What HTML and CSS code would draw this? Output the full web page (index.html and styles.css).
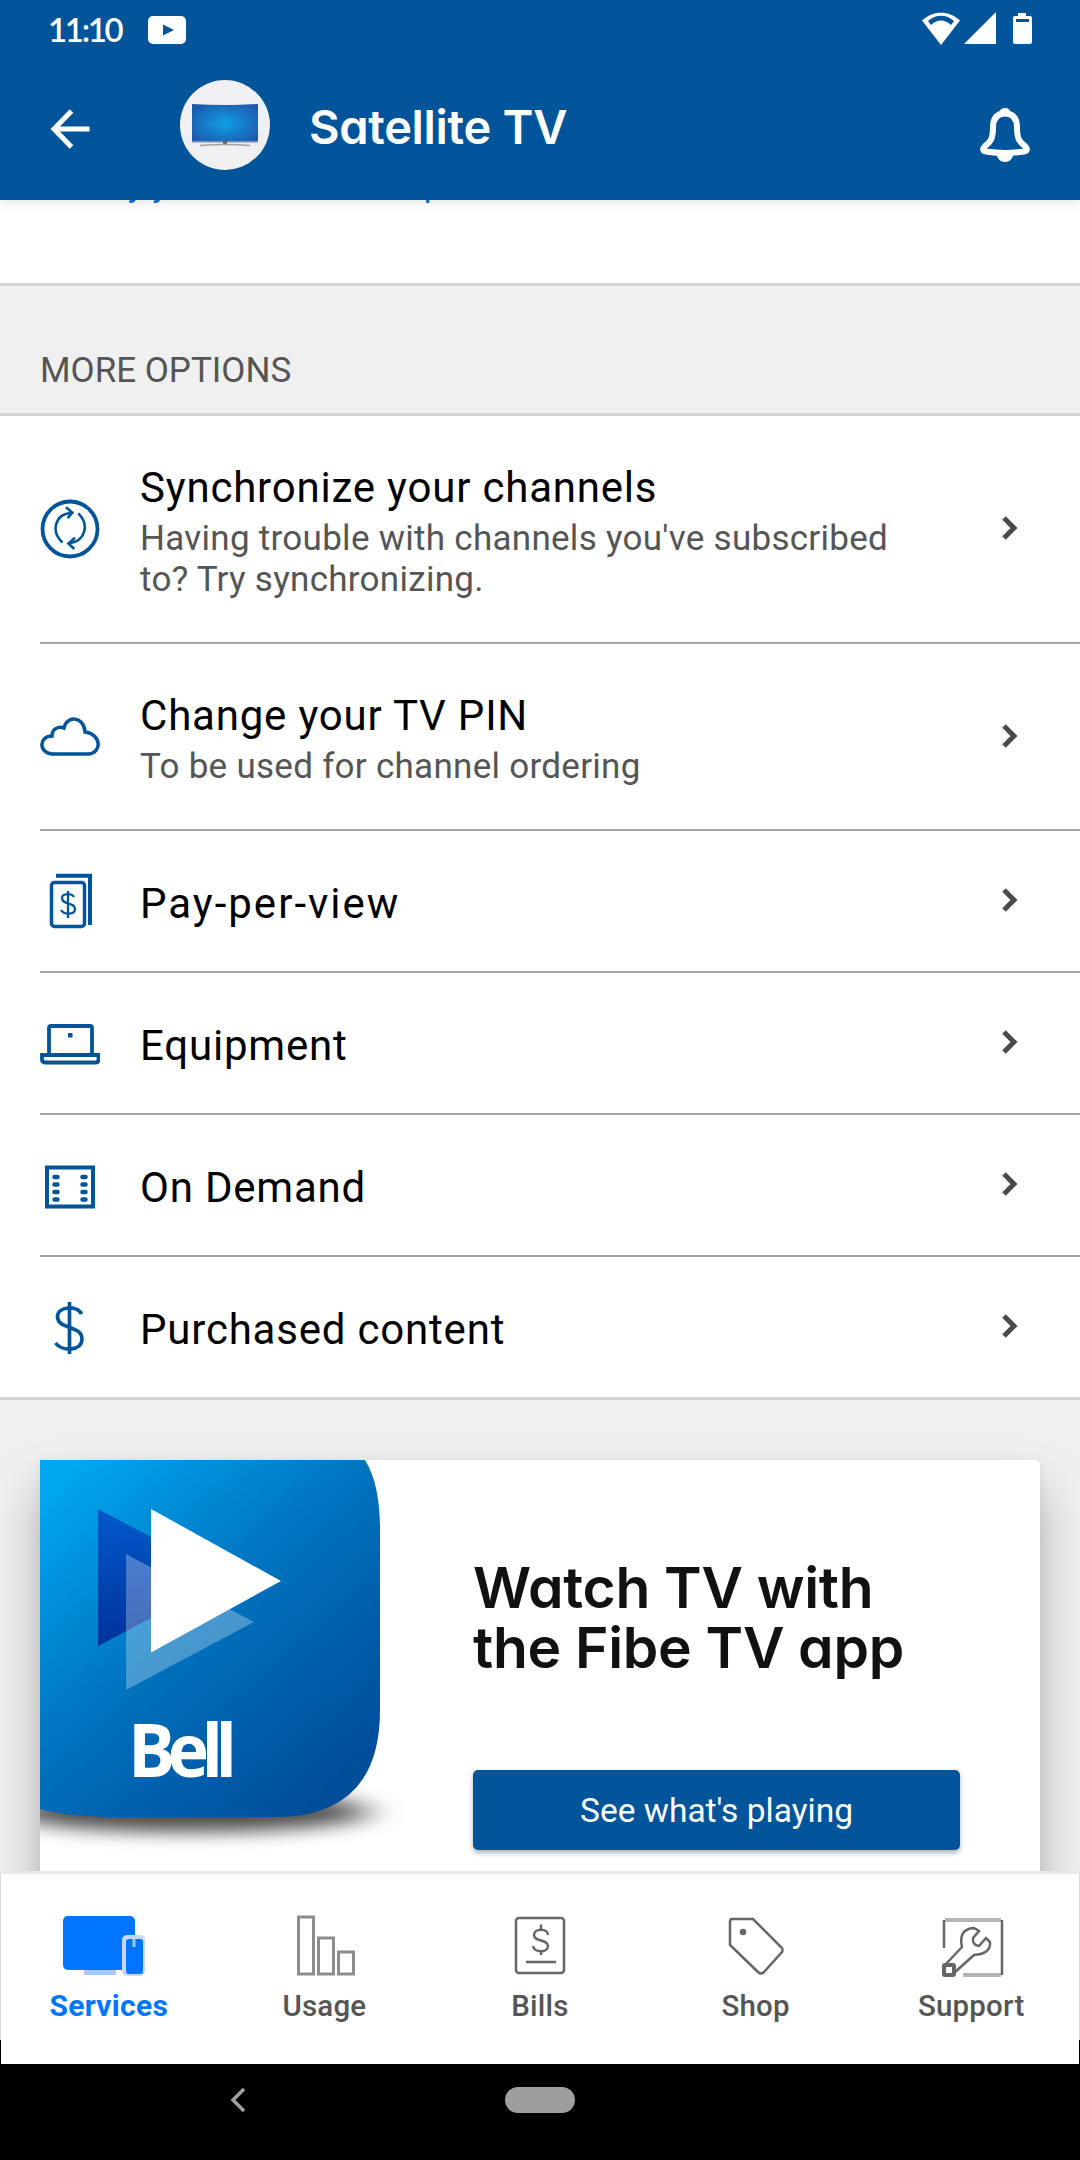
FILE: index.html
```html
<!DOCTYPE html>
<html lang="en">

<head>
    <meta charset="UTF-8">
    <meta name="viewport" content="width=device-width, initial-scale=1.0">
    <title>Satellite TV</title>
    <link rel="stylesheet" href="styles.css">
</head>

<body>
    <header class="header">
        <div class="status-bar">
            <span class="time">11:10</span>
            <svg class="youtube" width="38" height="28" viewBox="0 0 38 28">
                <rect width="38" height="28" rx="5" fill="#fff"/>
                <path d="M15 8.500v11l11-5.500z" fill="#00549a"/>
            </svg>
            <svg class="signals" width="112" height="34" viewBox="0 0 112 34" fill="#fff">
                <path fill-rule="evenodd" d="M21 33 2 8.500C13-2 29-2 40 8.500zM8 9l3 4C17 7 25 7 31 13l3-4C26 2 16 2 8 9z"/>
                <path d="M44 32 76 0v32z"/>
                <path fill-rule="evenodd" d="M98 1h8v3h4q2 0 2 2v24q0 2-2 2H95q-2 0-2-2V6q0-2 2-2h3zM96 7v3h13V7z"/>
            </svg>
        </div>
        <div class="app-bar">
            <svg class="back" width="40" height="40" viewBox="0 0 40 40" fill="none" stroke="#fff" stroke-width="5">
                <path d="M21.500 2 4 20l17.500 18M4 20h35.500"/>
            </svg>
            <div class="avatar">
                <svg width="66" height="43" viewBox="0 0 66 43">
                    <defs>
                        <radialGradient id="screen" cx="50%" cy="52%" r="60%">
                            <stop offset="0" stop-color="#0e9fe3"/>
                            <stop offset="1" stop-color="#1d5bb0"/>
                        </radialGradient>
                    </defs>
                    <path d="M0 0q33 2 66 0v37.500H0z" fill="url(#screen)"/>
                    <path d="M0 38h66" fill="none" stroke="#7184a0"/>
                    <path d="M31 37h4v3h-4z" fill="#666"/>
                    <path d="M8 41.500q25-2 50 0" fill="none" stroke="#a3a0a8" stroke-width="1.500"/>
                </svg>
            </div>
            <h1 class="title">Satellite TV</h1>
            <svg class="alerts" width="50" height="54" viewBox="0 0 50 54">
                <path d="M25 5.500c-9 0-12 6-12 14 0 12-3 15-8 18.500-3 3-2 5 1 5.500q19 3 38 0c3-.5 4-2.500 1-5.500-5-3.500-8-6.500-8-18.500 0-8-3-14-12-14z" fill="none" stroke="#fff" stroke-width="6"/>
                <path d="M19 5q1-5 6-5t6 5zM16 45h18q-2 9-9 9t-9-9z" fill="#fff"/>
            </svg>
        </div>
    </header>

    <main class="content">
        <section class="lineup">
            <a class="lineup-link">Modify your channel lineup</a>
        </section>

        <h2 class="section-title">MORE OPTIONS</h2>

        <ul class="options">
            <li class="option">
                <svg class="icon" width="60" height="60" viewBox="0 0 60 60">
                    <circle cx="30" cy="30" r="27.500" stroke-width="3.800"/>
                    <path stroke-width="2.600" d="M22.500 43.500C11 33 14 15 32 13.700M26 8.300l6.300 5.400-4.600 5.400M38.300 14.300C50 26 45 43 28.500 44.500M35 38.700l-6.500 5.800 5.800 5.500"/>
                </svg>
                <div class="option-text">
                    <h3>Synchronize your channels</h3>
                    <p>Having trouble with channels you've subscribed<br>to? Try synchronizing.</p>
                </div>
                <svg class="chevron" width="16" height="24" viewBox="0 0 16 24"><path d="M2 2l10 10L2 22"/></svg>
            </li>
            <li class="option">
                <svg class="icon" width="60" height="60" viewBox="0 0 60 60">
                    <path stroke-width="3.500" d="M12 47C-2 45.500-1 29 12 29 12 22 18 19 24 21 26 8.500 44 8.500 45 25 62 27 62 46.500 48 47z"/>
                </svg>
                <div class="option-text">
                    <h3>Change your TV PIN</h3>
                    <p>To be used for channel ordering</p>
                </div>
                <svg class="chevron" width="16" height="24" viewBox="0 0 16 24"><path d="M2 2l10 10L2 22"/></svg>
            </li>
            <li class="option">
                <svg class="icon" width="60" height="60" viewBox="0 0 60 60">
                    <rect x="11.500" y="11.500" width="33" height="44" rx="3" stroke-width="3.500"/>
                    <path stroke-width="4" d="M16 4.700h34V54"/>
                    <path stroke-width="2.300" d="M28 20v27M34 26c-2-4-12-4-12 1 0 7 13 4 13 11 0 6-11 6-14 1"/>
                </svg>
                <div class="option-text">
                    <h3 class="hyphenated">Pay-per-view</h3>
                </div>
                <svg class="chevron" width="16" height="24" viewBox="0 0 16 24"><path d="M2 2l10 10L2 22"/></svg>
            </li>
            <li class="option">
                <svg class="icon" width="60" height="60" viewBox="0 0 60 60">
                    <path stroke-width="3.800" d="M9 41V15q0-2 2-2h39q2 0 2 2v26M2 42h56.500v4.500q0 3-3 3h-50q-3.500 0-3.500-3z"/>
                    <path stroke="none" fill="#00549a" d="M28 20h4.500v4.500H28z"/>
                </svg>
                <div class="option-text">
                    <h3>Equipment</h3>
                </div>
                <svg class="chevron" width="16" height="24" viewBox="0 0 16 24"><path d="M2 2l10 10L2 22"/></svg>
            </li>
            <li class="option">
                <svg class="icon" width="60" height="60" viewBox="0 0 60 60">
                    <rect x="7" y="12.500" width="46" height="39" stroke-width="4"/>
                    <path stroke-width="4.500" stroke-linecap="round" d="M14.500 22h3M14.500 29.500h3M14.500 37h3M14.500 44.500h3M42.500 22h3M42.500 29.500h3M42.500 37h3M42.500 44.500h3"/>
                </svg>
                <div class="option-text">
                    <h3>On Demand</h3>
                </div>
                <svg class="chevron" width="16" height="24" viewBox="0 0 16 24"><path d="M2 2l10 10L2 22"/></svg>
            </li>
            <li class="option">
                <svg class="icon" width="60" height="60" viewBox="0 0 60 60">
                    <path stroke-width="3.700" d="M29.500 5v52M41.500 17C38 8 17 9 17.500 20 18 33 42 28 42 42 42 54 22 55 15.500 46"/>
                </svg>
                <div class="option-text">
                    <h3>Purchased content</h3>
                </div>
                <svg class="chevron" width="16" height="24" viewBox="0 0 16 24"><path d="M2 2l10 10L2 22"/></svg>
            </li>
        </ul>

        <section class="promo">
            <svg class="promo-image" width="380" height="460" viewBox="0 0 380 460">
                <defs>
                    <linearGradient id="tile" gradientUnits="userSpaceOnUse" x1="10" y1="20" x2="300" y2="350">
                        <stop offset="0" stop-color="#00a8f2"/>
                        <stop offset="0.45" stop-color="#0074bf"/>
                        <stop offset="0.75" stop-color="#005ba8"/>
                        <stop offset="1" stop-color="#004b97"/>
                    </linearGradient>
                    <linearGradient id="back" x1="0" y1="0" x2="0" y2="1">
                        <stop offset="0" stop-color="#0059cb"/>
                        <stop offset="1" stop-color="#00329a"/>
                    </linearGradient>
                    <filter id="soft" x="-30%" y="-150%" width="160%" height="400%">
                        <feGaussianBlur stdDeviation="18 9"/>
                    </filter>
                </defs>
                <ellipse cx="150" cy="352" rx="180" ry="20" fill="#000" opacity="0.7" filter="url(#soft)"/>
                <path d="M0-20h300Q340-6 340 70V250Q340 357 235 357H80Q30 357 0 349z" fill="url(#tile)"/>
                <path d="M58 49l130 68.500L58 186z" fill="url(#back)"/>
                <path d="M86 94l128 68L86 230z" fill="#fff" opacity="0.28"/>
                <path d="M111 49l130 72-130 71.500z" fill="#fff"/>
                <text class="promo-logo" transform="translate(88 317) scale(.95 1)">Bell</text>
            </svg>
            <div class="promo-body">
                <h2>Watch TV with<br>the Fibe TV app</h2>
                <button class="promo-button">See what's playing</button>
            </div>
        </section>
    </main>

    <nav class="tabs">
        <a class="tab active">
            <svg width="84" height="64" viewBox="0 0 84 64">
                <path fill="#a8c6ff" d="M22 54h32v7H22z"/>
                <rect x="1" y="2" width="72" height="54" rx="5" fill="#0075ff"/>
                <rect x="60" y="21" width="23" height="41" rx="5" fill="#c8d6ff"/>
                <rect x="64" y="25" width="17" height="35" rx="3" fill="#0075ff"/>
                <path d="M72 25v8" stroke="#a8c6ff" stroke-width="3"/>
            </svg>
            <span>Services</span>
        </a>
        <a class="tab usage">
            <svg width="60" height="64" viewBox="0 0 60 64">
                <path d="M3.500 3h15v57h-15zM23.500 24h15v36h-15zM43.500 38h15v22h-15z"/>
            </svg>
            <span>Usage</span>
        </a>
        <a class="tab">
            <svg width="52" height="64" viewBox="0 0 52 64">
                <rect x="2" y="4" width="48" height="55" rx="3"/>
                <path d="M12 48h30M27 10.500v5M27 36v5M34 21c0-7-14-7-14 0 0 7 14 4 14 11 0 7-14 7-15 0"/>
            </svg>
            <span>Bills</span>
        </a>
        <a class="tab">
            <svg width="58" height="64" viewBox="0 0 58 64">
                <path d="M5 5h21l29 29q1 2 0 4L37 58q-3 3-6 0L3 31V8q0-3 2-3z"/>
                <circle cx="16" cy="18" r="2" fill="#666"/>
            </svg>
            <span>Shop</span>
        </a>
        <a class="tab support">
            <svg width="62" height="64" viewBox="0 0 62 64">
                <path d="M3 6h56M21 61h38" stroke="#b5b5b5" stroke-width="4"/>
                <path d="M2 34V6M60 6v55"/>
                <path d="M4 50 20 33q-4-18 12-19l5 3-6 7q-1 7 6 8l7-8 4 4q1 12-16 13L12 59"/>
                <rect x="2" y="51" width="10" height="10" rx="1" stroke-width="4"/>
            </svg>
            <span>Support</span>
        </a>
    </nav>

    <footer class="system-bar">
        <svg width="18" height="26" viewBox="0 0 18 26" fill="none" stroke="#a0a0a0" stroke-width="3.500"><path d="M15 2 4 13l11 11"/></svg>
        <div class="home-pill"></div>
    </footer>
</body>

</html>
```
FILE: styles.css
```css
:root {
    --blue: #00549a;
    --grey-bg: #f0f0f0;
    --text-muted: #555555;
    --active: #0075ff;
}

* {
    box-sizing: border-box;
}

body {
    display: flex;
    flex-direction: column;
    width: 1080px;
    height: 2160px;
    margin: 0;
    overflow: hidden;
    background-color: #ffffff;
    font-family: Roboto, sans-serif;
}

h1,
h2,
h3,
p,
ul {
    margin: 0;
    padding: 0;
    font-weight: 400;
}

svg {
    display: block;
    flex-shrink: 0;
}

/* header */
.header {
    position: relative;
    z-index: 2;
    flex: 0 0 200px;
    background-color: var(--blue);
    color: #ffffff;
    box-shadow: 0 2px 10px rgba(0, 0, 0, 0.12);
}

.status-bar {
    display: flex;
    align-items: center;
    height: 60px;
    padding: 0 48px 2px 48px;
}

.time {
    width: 100px;
    font-family: Lato, sans-serif;
    font-size: 33px;
    font-weight: 600;
    letter-spacing: -2.3px;
    white-space: nowrap;
}

.youtube {
    margin-top: 2px;
}

.signals {
    margin-left: auto;
}

.app-bar {
    display: flex;
    align-items: center;
    height: 140px;
    padding: 0 50px 10px;
}

.back {
    margin-top: 8px;
}

.avatar {
    display: flex;
    align-items: center;
    justify-content: center;
    width: 90px;
    height: 90px;
    margin-left: 90px;
    border-radius: 50%;
    background-color: #f0f0f2;
}

.title {
    margin-top: 3px;
    margin-left: 39px;
    font-family: Inter, sans-serif;
    font-feature-settings: "cv11";
    font-size: 47px;
    font-weight: 600;
    letter-spacing: -0.3px;
}

.alerts {
    margin-top: 20px;
    margin-left: auto;
}

/* list */
.content {
    flex: 0 0 1671px;
    overflow: hidden;
    background-color: var(--grey-bg);
}

.lineup {
    display: flex;
    height: 86px;
    border-bottom: 3px solid #d4d4d4;
    background-color: #ffffff;
}

.lineup-link {
    height: 40px;
    margin-top: -35px;
    padding-left: 40px;
    color: #0a6fdc;
    font-size: 33.8px;
    line-height: 40px;
}

.section-title {
    height: 130px;
    padding: 64px 40px 0;
    border-bottom: 3px solid #d4d4d4;
    color: var(--text-muted);
    font-size: 35px;
    line-height: 41px;
}

.options {
    border-bottom: 3px solid #d4d4d4;
    background-color: #ffffff;
    list-style: none;
}

.option {
    display: flex;
    align-items: center;
    height: 142px;
    margin-left: 40px;
    padding-right: 62px;
    border-bottom: 2px solid #a6a6a6;
}

.option:nth-child(1) {
    height: 228px;
}

.option:nth-child(2) {
    height: 187px;
}

.option:last-child {
    height: 140px;
    border-bottom: none;
}

.icon {
    fill: none;
    stroke: var(--blue);
}

.option-text {
    flex: 1;
    padding-top: 5px;
    padding-left: 40px;
}

.option-text h3 {
    color: #000000;
    font-size: 42px;
    line-height: 49px;
    letter-spacing: 0.8px;
}

.option-text .hyphenated {
    letter-spacing: 2px;
}

.option-text p {
    margin-top: 6px;
    color: var(--text-muted);
    font-size: 35px;
    line-height: 41px;
    letter-spacing: 0.28px;
}

.chevron {
    margin-top: -2px;
    fill: none;
    stroke: #4a4a4a;
    stroke-width: 5;
}

/* promo card */
.promo {
    display: flex;
    width: 1000px;
    height: 470px;
    margin: 60px 40px 0;
    border-radius: 5px;
    background-color: #ffffff;
    box-shadow: 0 30px 50px rgba(0, 0, 0, 0.28), 0 2px 12px rgba(0, 0, 0, 0.06);
}

.promo-logo {
    fill: #ffffff;
    font-family: "Open Sans", sans-serif;
    font-size: 74px;
    font-weight: 700;
    letter-spacing: -8px;
}

.promo-body {
    padding: 98px 0 0 53px;
}

.promo-body h2 {
    color: #111111;
    font-family: Inter, sans-serif;
    font-feature-settings: "cv11";
    font-size: 57px;
    font-weight: 600;
    line-height: 60px;
    letter-spacing: -0.3px;
    white-space: nowrap;
}

.promo-button {
    display: block;
    width: 487px;
    height: 80px;
    margin-top: 92px;
    border: none;
    border-radius: 5px;
    background-color: var(--blue);
    box-shadow: 0 3px 5px rgba(0, 0, 0, 0.3);
    color: #ffffff;
    font-family: Roboto, sans-serif;
    font-size: 33.5px;
}

/* bottom tabs, with a 1px edge that turns black near the bottom */
.tabs {
    display: flex;
    flex: 0 0 193px;
    padding: 0 1px;
    border-top: 3px solid #e9e9e9;
    background:
        linear-gradient(#ffffff, #ffffff) center / calc(100% - 2px) 100% no-repeat,
        linear-gradient(#d8d8d8 166px, #000000 166px);
}

.tab {
    display: flex;
    flex: 1;
    flex-direction: column;
    align-items: center;
    padding-top: 40px;
    color: #555555;
    font-size: 29.5px;
    font-weight: 500;
    line-height: 34px;
    letter-spacing: 0.2px;
}

.tab svg {
    margin-bottom: 11px;
    fill: none;
    stroke: #666666;
    stroke-width: 2.5;
}

.tab.active {
    color: var(--active);
    font-size: 30px;
    font-weight: 700;
    letter-spacing: 0.3px;
}

.tab.active svg {
    margin-left: -10px;
    stroke: none;
}

.usage svg {
    margin-left: 2px;
    stroke: #8c8c8c;
    stroke-width: 3;
}

.support svg {
    margin-left: 4px;
}

/* android navigation */
.system-bar {
    display: flex;
    align-items: center;
    flex: 0 0 96px;
    padding: 0 0 0 229px;
    background-color: #000000;
}

.home-pill {
    width: 70px;
    height: 26px;
    margin-left: 258px;
    border-radius: 13px;
    background-color: #9e9e9e;
}

.system-bar svg,
.home-pill {
    margin-bottom: 24px;
}
```
